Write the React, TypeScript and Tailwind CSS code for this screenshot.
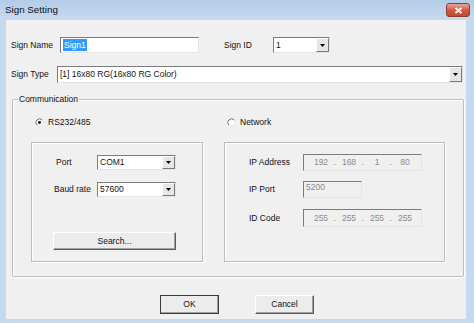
import React from 'react';

const sunken = 'border border-t-[#7c7c7c] border-l-[#7c7c7c] border-b-[#e4e4e4] border-r-[#e4e4e4]';
const etched = 'border border-[#bdbdbd] shadow-[inset_1px_1px_0_#fff,1px_1px_0_#fff]';

const Arrow = () => (
    <div className="w-[13px] h-full bg-[#e6e6e6] border border-t-white border-l-white border-b-[#7a7a7a] border-r-[#7a7a7a] flex items-center justify-center">
        <svg width="5" height="3" viewBox="0 0 5 3">
            <path d="M0 0h5L2.5 3z" fill="#000" />
        </svg>
    </div>
);

const Combo = ({ value, className }: { value: string; className: string }) => (
    <div className={`${sunken} ${className} bg-white flex items-stretch`}>
        <span className="flex-1 pl-[2px] leading-none flex items-center">{value}</span>
        <Arrow />
    </div>
);

const Radio = ({ checked }: { checked?: boolean }) => (
    <svg width="9" height="9" viewBox="0 0 10 10">
        <circle cx="5" cy="5" r="4" fill="#fff" />
        <path d="M2.17 7.83A4 4 0 0 1 7.83 2.17" stroke="#6e6e6e" strokeWidth="1.1" fill="none" />
        <path d="M7.83 2.17A4 4 0 0 1 2.17 7.83" stroke="#e2e2e2" strokeWidth="1" fill="none" />
        {checked && <circle cx="5" cy="5" r="1.6" fill="#000" />}
    </svg>
);

const IpBox = ({ parts, className }: { parts: string[]; className: string }) => (
    <div className={`${sunken} ${className} flex items-center pl-[6px] text-[#8c8c8c]`}>
        {parts.map((p, i) => (
            <React.Fragment key={i}>
                {i > 0 && <span className="w-[6px] text-center">.</span>}
                <span className="w-[22px] text-center">{p}</span>
            </React.Fragment>
        ))}
    </div>
);

const Button = ({ label, className }: { label: string; className: string }) => (
    <div className={`${className} bg-[#ececec] border border-t-white border-l-white border-b-[#5a5a5a] border-r-[#5a5a5a] shadow-[inset_-1px_-1px_0_#a0a0a0] flex items-center justify-center`}>
        {label}
    </div>
);

export default function App() {
    return (
        <div className="w-[474px] h-[323px] bg-[#c5d9ef] flex flex-col font-['Liberation_Sans',Arial,sans-serif] text-[8.5px] text-[#111]">
            <div className="h-[20px] flex items-center justify-between pl-[5px] pr-[4px] bg-linear-to-b from-[#b4cce8] to-[#c8daf0]">
                <span className="text-[9.8px]">Sign Setting</span>
                <div className="w-[24px] h-[14px] rounded-[3px] border border-[#8b3b2f] bg-linear-to-b from-[#e9a898] via-[#d05a45] to-[#c4452f] flex items-center justify-center">
                    <svg width="9" height="7" viewBox="0 0 9 7">
                        <path d="M1.5 1l6 5M7.5 1l-6 5" stroke="#fff" strokeWidth="2" />
                    </svg>
                </div>
            </div>

            <div className="ml-[6px] mr-[8px] h-[299px] bg-[#f0f0f0] pl-[5px] flex flex-col">
                <div className="mt-[17px] h-[16px] flex items-center">
                    <span className="w-[49px]">Sign Name</span>
                    <div className={`${sunken} w-[139px] h-full bg-white flex items-center pl-[2px]`}>
                        <span className="bg-[#3399ff] text-white px-[1px] leading-[12px]">Sign1</span>
                    </div>
                    <span className="ml-[25px] w-[49px]">Sign ID</span>
                    <Combo value="1" className="w-[57px] h-full" />
                </div>

                <div className="mt-[13px] h-[17px] flex items-center">
                    <span className="w-[46px]">Sign Type</span>
                    <Combo value="[1] 16x80 RG(16x80 RG Color)" className="w-[406px] h-full" />
                </div>

                <div className={`relative mt-[16px] ml-[1px] w-[452px] h-[178px] rounded-[2px] ${etched}`}>
                    <span className="absolute -top-[6px] left-[5px] px-[1px] bg-[#f0f0f0] leading-[11px]">Communication</span>

                    <div className="mt-[16px] pl-[22px] h-[12px] flex items-center">
                        <div className="w-[192px] flex items-center gap-[4px]">
                            <Radio checked />
                            <span>RS232/485</span>
                        </div>
                        <div className="flex items-center gap-[4px]">
                            <Radio />
                            <span>Network</span>
                        </div>
                    </div>

                    <div className="mt-[14px] ml-[18px] flex gap-[21px]">
                        <div className={`w-[172px] h-[120px] ${etched} pl-[22px] pt-[12px] flex flex-col`}>
                            <div className="h-[15px] flex items-center">
                                <span className="w-[43px] pl-[2px]">Port</span>
                                <Combo value="COM1" className="w-[79px] h-full" />
                            </div>
                            <div className="mt-[12px] h-[15px] flex items-center">
                                <span className="w-[43px]">Baud rate</span>
                                <Combo value="57600" className="w-[79px] h-full" />
                            </div>
                            <Button label="Search..." className="mt-[35px] -ml-[1px] w-[123px] h-[18px]" />
                        </div>

                        <div className={`w-[221px] h-[120px] ${etched} pl-[24px] pt-[11px] flex flex-col`}>
                            <div className="h-[17px] flex items-center">
                                <span className="w-[54px]">IP Address</span>
                                <IpBox parts={['192', '168', '1', '80']} className="w-[119px] h-full" />
                            </div>
                            <div className="mt-[10px] h-[17px] flex items-center">
                                <span className="w-[54px]">IP Port</span>
                                <div className={`${sunken} w-[59px] h-full pl-[2px] pt-[1px] text-[#8c8c8c] leading-none`}>5200</div>
                            </div>
                            <div className="mt-[11px] h-[18px] flex items-center">
                                <span className="w-[54px]">ID Code</span>
                                <IpBox parts={['255', '255', '255', '255']} className="w-[119px] h-full" />
                            </div>
                        </div>
                    </div>
                </div>

                <div className="mt-[18px] pl-[149px] flex gap-[36px]">
                    <Button label="OK" className="w-[59px] h-[19px] outline outline-[#3c3c3c] -outline-offset-1" />
                    <Button label="Cancel" className="w-[59px] h-[19px]" />
                </div>
            </div>
        </div>
    );
}
